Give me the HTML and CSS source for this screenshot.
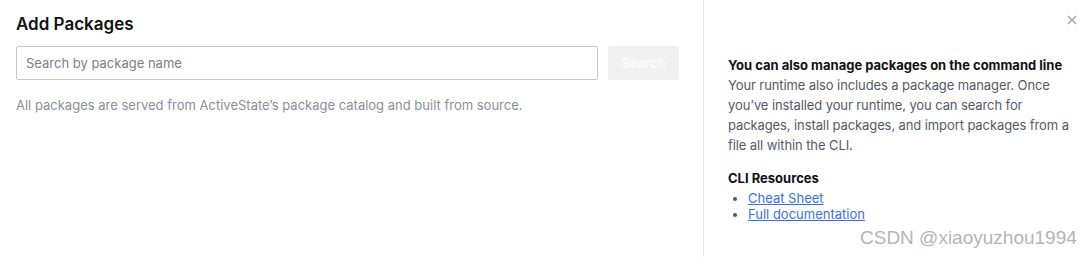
FILE: index.html
```html
<!DOCTYPE html>
<html>
<head>
<meta charset="utf-8">
<link rel="stylesheet" href="styles.css">
</head>
<body>
<div class="modal">
  <section class="main">
    <h1 class="title">Add Packages</h1>
    <div class="search-row">
      <input class="search-input" type="text" placeholder="Search by package name">
      <button class="search-btn">Search</button>
    </div>
    <p class="note">All packages are served from ActiveState’s package catalog and built from source.</p>
  </section>
  <aside class="side">
    <div class="close-row">
      <svg class="close" width="10" height="10" viewBox="0 0 10 10"><path d="M1 1L9 9M9 1L1 9" stroke="#a0a0a0" stroke-width="1.3" fill="none"/></svg>
    </div>
    <h2 class="side-title">You can also manage packages on the command line</h2>
    <p class="side-text">Your runtime also includes a package manager. Once you’ve installed your runtime, you can search for packages, install packages, and import packages from a file all within the CLI.</p>
    <h3 class="res-title">CLI Resources</h3>
    <ul class="res-list">
      <li><a href="#">Cheat Sheet</a></li>
      <li><a href="#">Full documentation</a></li>
    </ul>
  </aside>
  <div class="watermark">CSDN @xiaoyuzhou1994</div>
</div>
</body>
</html>
```
FILE: styles.css
```css
* { box-sizing: border-box; }
html, body { margin: 0; padding: 0; background: #fff; }
body { font-family: Inter, "Noto Sans", sans-serif; color: #111; }
.modal { position: relative; display: flex; width: 1090px; height: 257px; }
.main { width: 704px; border-right: 1px solid #e6e6e6; padding: 12px 24px 0 16px; }
.title { margin: 0; font-size: 17px; font-weight: 600; line-height: 24px; color: #111; }
.search-row { display: flex; gap: 10px; margin-top: 10px; }
.search-input { width: 582px; height: 34px; border: 1px solid #c6c8cc; border-radius: 2px; padding: 0 9px; font-family: inherit; font-size: 13px; color: #222; outline: none; }
.search-input::placeholder { color: #7b7f86; }
.search-btn { width: 71px; height: 34px; border: none; border-radius: 3px; background: #f0f0f0; color: #fbfbfb; font-family: inherit; font-weight: 700; font-size: 13px; }
.note { margin: 16px 0 0; font-size: 13px; line-height: 18px; color: #8a8f98; }
.side { flex: 1; padding: 0 12px 0 24px; }
.close-row { display: flex; justify-content: flex-end; padding-top: 15px; margin-right: 1px; height: 55px; }
.side-title { margin: 0; font-size: 13px; font-weight: 700; line-height: 20px; color: #111; }
.side-text { margin: 0; font-size: 13px; line-height: 20px; letter-spacing: -0.1px; color: #555b66; }
.res-title { margin: 13px 0 0; font-size: 13px; font-weight: 700; line-height: 20px; color: #111; }
.res-list { margin: 2px 0 0; padding-left: 20px; font-size: 13px; line-height: 16px; color: #555; }
.res-list a { color: #3b6fe8; text-decoration: underline; }
.watermark { position: absolute; left: 860px; top: 227px; font-family: "Liberation Sans", Arial, sans-serif; font-size: 19px; color: #b5b5b5; }
```
